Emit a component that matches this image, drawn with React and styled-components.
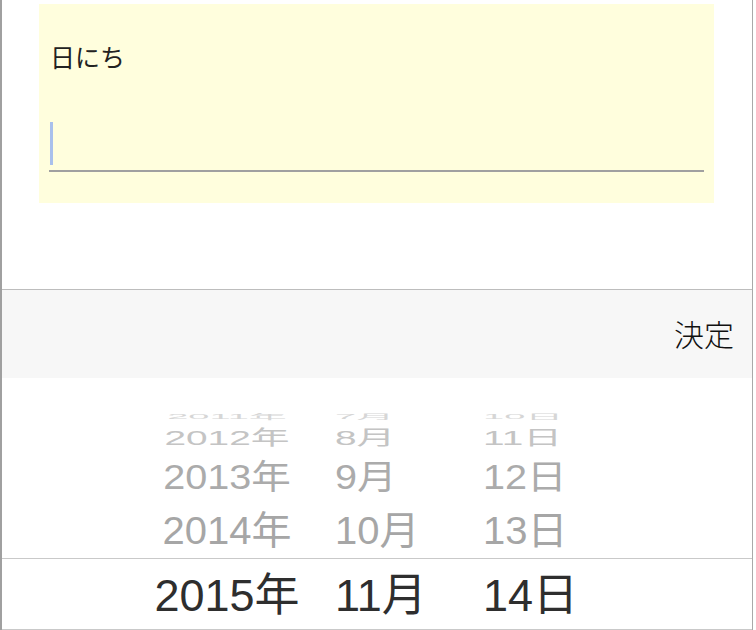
import React from "react";
import styled, { createGlobalStyle } from "styled-components";

const GlobalStyle = createGlobalStyle`
  html, body {
    margin: 0;
    padding: 0;
    background: #fff;
    overflow: hidden;
  }
  body {
    font-family: "Liberation Sans", "Noto Sans CJK JP", sans-serif;
  }
`;

// wheel rows above the selection, from the far top of the drum down
const wheel = [
  { year: 2011, month: 7, day: 10, h: 16, sx: 0.95, sy: 0.16, tone: "#d6d6d6" },
  { year: 2012, month: 8, day: 11, h: 26, sx: 0.97, sy: 0.5, tone: "#c4c4c4" },
  { year: 2013, month: 9, day: 12, h: 51, sx: 0.99, sy: 0.86, tone: "#ababab" },
  { year: 2014, month: 10, day: 13, h: 56, sx: 1, sy: 0.97, tone: "#a6a6a6" },
];

const App = () => {
  return (
    <>
      <GlobalStyle />
      <Screen>
        <Edge $w={2} $bg="#a0a0a0" />
        <Sheet>
          <FormArea>
            <Card>
              <Label>日にち</Label>
              <Field>
                <Caret />
              </Field>
            </Card>
          </FormArea>

          <Toolbar>
            <DoneButton>決定</DoneButton>
          </Toolbar>

          <Picker>
            {wheel.map((r) => (
              <Row key={r.year} $h={r.h}>
                <Cell $align="center" $sx={r.sx} $sy={r.sy} $tone={r.tone}>
                  {r.year}年
                </Cell>
                <Cell $sx={r.sx} $sy={r.sy} $tone={r.tone}>
                  {r.month}月
                </Cell>
                <Cell $sx={r.sx} $sy={r.sy} $tone={r.tone}>
                  {r.day}日
                </Cell>
              </Row>
            ))}
            <SelectedRow $h={67}>
              <Cell $align="center" $big>2015年</Cell>
              <Cell $big>11月</Cell>
              <Cell $big>14日</Cell>
            </SelectedRow>
          </Picker>
        </Sheet>
        <Edge $w={1} $bg="#a9a9a9" />
        <Edge $w={3} $bg="#fff" />
      </Screen>
    </>
  );
};

const Screen = styled.div`
  display: flex;
  height: 630px;
  width: 756px;
`;

const Edge = styled.div`
  width: ${(p) => p.$w}px;
  flex-shrink: 0;
  background: ${(p) => p.$bg};
`;

const Sheet = styled.div`
  width: 750px;
  flex-shrink: 0;
  display: flex;
  flex-direction: column;
  background: #fff;
`;

const FormArea = styled.div`
  height: 289px;
  padding: 4px 38px 0 37px;
  box-sizing: border-box;
`;

const Card = styled.div`
  height: 199px;
  background: #fffedd;
  padding: 38px 10px 0 10px;
  box-sizing: border-box;
`;

const Label = styled.div`
  font-family: "Noto Sans CJK JP", sans-serif;
  font-size: 25px;
  line-height: 29px;
  color: #222;
  padding-left: 1px;
`;

const Field = styled.div`
  margin-top: 46px;
  height: 53px;
  border-bottom: 2px solid #a0a0a0;
  display: flex;
  align-items: center;
`;

const Caret = styled.div`
  width: 3px;
  height: 43px;
  margin-left: 1px;
  background: #a9c0ec;
`;

const Toolbar = styled.div`
  height: 88px;
  border-top: 1px solid #bdbdbd;
  background: #f7f7f7;
  display: flex;
  align-items: center;
  justify-content: flex-end;
  padding-right: 18px;
`;

const DoneButton = styled.button`
  border: 0;
  background: none;
  padding: 0;
  font-family: "Noto Sans CJK JP", sans-serif;
  font-weight: 300;
  font-size: 30px;
  line-height: 1;
  color: #111;
  margin-bottom: 3px;
`;

const Picker = styled.div`
  flex: 1;
  padding-top: 31px;
  overflow: hidden;
  background: #fff;
`;

const Row = styled.div`
  display: grid;
  grid-template-columns: 150px 115px 1fr;
  grid-template-rows: ${(p) => p.$h}px;
  column-gap: 33px;
  padding-left: 150px;
  height: ${(p) => p.$h}px;
`;

const SelectedRow = styled(Row)`
  border-top: 1px solid #c9c9c9;
  border-bottom: 1px solid #c9c9c9;
  padding-top: 3px;
  box-sizing: content-box;
`;

const Cell = styled.div`
  align-self: center;
  font-size: ${(p) => (p.$big ? 45 : 40)}px;
  line-height: 40px;
  height: 40px;
  white-space: nowrap;
  text-align: ${(p) => p.$align || "left"};
  color: ${(p) => (p.$big ? "#2e2e2e" : p.$tone)};
  transform: scale(${(p) => p.$sx ?? 1}, ${(p) => p.$sy ?? 1});
  transform-origin: ${(p) => (p.$align === "center" ? "center" : "left center")};
`;

export default App;
